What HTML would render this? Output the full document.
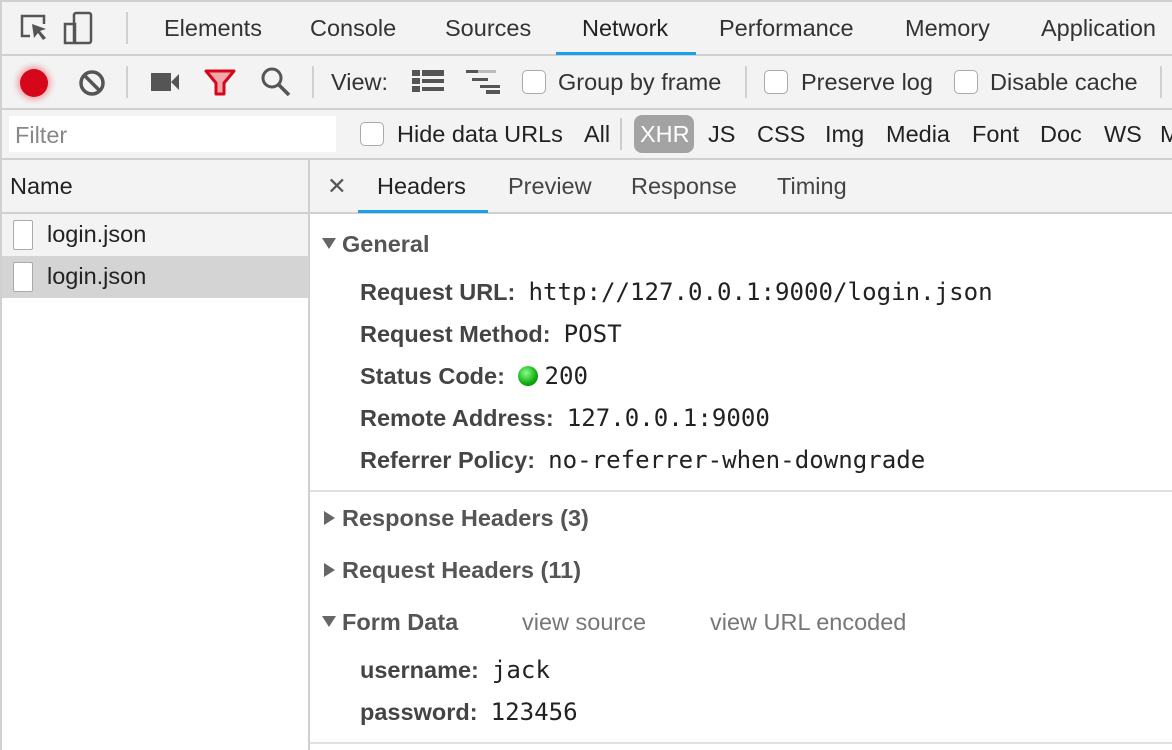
<!DOCTYPE html>
<html><head><meta charset="utf-8"><style>
*{margin:0;padding:0;box-sizing:border-box}
body{width:1172px;height:750px;overflow:hidden;background:#fff;font-family:"Liberation Sans",sans-serif;font-size:23.5px;color:#303942;position:relative}
.a{position:absolute;white-space:nowrap;line-height:30px}
.bar{position:absolute;left:0;width:1172px;background:#f3f3f3;border-bottom:2px solid #d0d0d0}
.sep{position:absolute;width:2px;background:#d0d0d0}
.cb{position:absolute;width:24px;height:24px;border:1.5px solid #aaa;border-radius:5px;background:#fff}
.b{font-weight:bold;color:#555}
.lab{font-weight:bold;color:#444}
.mono{font-family:"DejaVu Sans Mono",monospace;font-size:24.1px;color:#222}
.tri{display:inline-block;width:0;height:0}
.dn{border-left:7px solid transparent;border-right:7px solid transparent;border-top:11px solid #666;margin-right:6px;vertical-align:3px}
.rt{border-top:7px solid transparent;border-bottom:7px solid transparent;border-left:11px solid #666;margin-right:7px;margin-left:2px;vertical-align:1px}
</style></head><body>
<div style="position:absolute;left:0;top:0;width:1172px;height:2px;background:#d0d0d0"></div>
<div class="bar" style="top:2px;height:54px"></div>
<div class="bar" style="top:56px;height:54px"></div>
<div class="bar" style="top:110px;height:50px"></div>
<div class="bar" style="top:160px;height:54px"></div>
<div style="position:absolute;left:0;top:0;width:2px;height:750px;background:#d0d0d0"></div>

<svg class="a" style="left:18px;top:12px" width="36" height="34" viewBox="0 0 36 34"><path d="M12 24H4V4h22v8" fill="none" stroke="#555" stroke-width="2.5"/><path d="M14 12l14 5-6 2 6 7-3 2-5-7-4 5z" fill="#555"/></svg>
<svg class="a" style="left:62px;top:10px" width="32" height="36" viewBox="0 0 32 36"><rect x="12" y="3" width="17" height="30" rx="2" fill="none" stroke="#555" stroke-width="2.5"/><rect x="3" y="14" width="10" height="19" fill="none" stroke="#555" stroke-width="2.5"/></svg>
<div class="sep" style="left:126px;top:12px;height:32px"></div>
<div class="a" style="left:164px;top:13px;color:#333">Elements</div>
<div class="a" style="left:310px;top:13px;color:#333">Console</div>
<div class="a" style="left:445px;top:13px;color:#333">Sources</div>
<div class="a" style="left:582px;top:13px;color:#222">Network</div>
<div style="position:absolute;left:556px;top:52px;width:140px;height:3px;background:#1a9fe8"></div>
<div class="a" style="left:719px;top:13px;color:#333">Performance</div>
<div class="a" style="left:905px;top:13px;color:#333">Memory</div>
<div class="a" style="left:1041px;top:13px;color:#333">Application</div>

<div style="position:absolute;left:20px;top:69px;width:28px;height:28px;border-radius:50%;background:#d6071a;box-shadow:0 0 6px 3px rgba(230,80,90,.45)"></div>
<svg class="a" style="left:77px;top:68px" width="30" height="30" viewBox="0 0 30 30"><circle cx="15" cy="15" r="11" fill="none" stroke="#555" stroke-width="3.5"/><path d="M7 7l16 16" stroke="#555" stroke-width="3.5"/></svg>
<div class="sep" style="left:126px;top:66px;height:32px"></div>
<svg class="a" style="left:150px;top:72px" width="30" height="20" viewBox="0 0 30 20"><rect x="1" y="1" width="20" height="18" fill="#555"/><path d="M21 10l8-8v16z" fill="#555"/></svg>
<svg class="a" style="left:204px;top:69px" width="32" height="28" viewBox="0 0 32 28"><path d="M2 2h28L20 14v11h-8V14z" fill="#f1a6ab" stroke="#d6071a" stroke-width="3" stroke-linejoin="round"/></svg>
<svg class="a" style="left:260px;top:66px" width="32" height="32" viewBox="0 0 32 32"><circle cx="12" cy="12" r="9" fill="none" stroke="#555" stroke-width="3"/><path d="M18 18l11 11" stroke="#555" stroke-width="3.5"/></svg>
<div class="sep" style="left:312px;top:66px;height:32px"></div>
<div class="a" style="left:331px;top:67px;color:#333">View:</div>
<svg class="a" style="left:412px;top:70px" width="32" height="24" viewBox="0 0 32 24"><g fill="#555"><rect x="0" y="0" width="8" height="6"/><rect x="10" y="0" width="22" height="6"/><rect x="0" y="8" width="8" height="6"/><rect x="10" y="9" width="22" height="4"/><rect x="0" y="16" width="8" height="6"/><rect x="10" y="17" width="22" height="4"/></g></svg>
<svg class="a" style="left:466px;top:70px" width="34" height="24" viewBox="0 0 34 24"><rect x="0" y="0" width="30" height="3" fill="#bbb"/><rect x="0" y="0" width="12" height="3" fill="#555"/><rect x="6" y="8" width="16" height="3" fill="#555"/><rect x="14" y="15" width="20" height="3" fill="#555"/><rect x="20" y="20" width="14" height="4" fill="#555"/></svg>
<div class="cb" style="left:522px;top:70px"></div>
<div class="a" style="left:558px;top:67px;color:#333">Group by frame</div>
<div class="sep" style="left:745px;top:66px;height:32px"></div>
<div class="cb" style="left:764px;top:70px"></div>
<div class="a" style="left:801px;top:67px;color:#333">Preserve log</div>
<div class="cb" style="left:954px;top:70px"></div>
<div class="a" style="left:990px;top:67px;color:#333">Disable cache</div>
<div class="sep" style="left:1160px;top:66px;height:32px"></div>

<div style="position:absolute;left:9px;top:116px;width:327px;height:36px;background:#fff"></div>
<div class="a" style="left:15px;top:120px;color:#888">Filter</div>
<div class="cb" style="left:360px;top:122px"></div>
<div class="a" style="left:397px;top:119px;color:#222">Hide data URLs</div>
<div class="a" style="left:584px;top:119px;color:#222">All</div>
<div class="sep" style="left:620px;top:118px;height:32px;background:#ccc"></div>
<div style="position:absolute;left:634px;top:115px;width:60px;height:38px;border-radius:8px;background:#a3a3a3"></div>
<div class="a" style="left:640px;top:119px;color:#fff">XHR</div>
<div class="a" style="left:708px;top:119px;color:#222">JS</div>
<div class="a" style="left:757px;top:119px;color:#222">CSS</div>
<div class="a" style="left:825px;top:119px;color:#222">Img</div>
<div class="a" style="left:886px;top:119px;color:#222">Media</div>
<div class="a" style="left:972px;top:119px;color:#222">Font</div>
<div class="a" style="left:1040px;top:119px;color:#222">Doc</div>
<div class="a" style="left:1104px;top:119px;color:#222">WS</div>
<div class="a" style="left:1160px;top:119px;color:#222">M</div>

<div class="sep" style="left:308px;top:160px;height:590px"></div>
<div class="a" style="left:10px;top:171px;color:#222">Name</div>
<div class="a" style="left:327px;top:171px;color:#555">✕</div>
<div class="a" style="left:377px;top:171px;color:#222">Headers</div>
<div style="position:absolute;left:358px;top:210px;width:130px;height:3px;background:#1a9fe8"></div>
<div class="a" style="left:508px;top:171px;color:#444">Preview</div>
<div class="a" style="left:631px;top:171px;color:#444">Response</div>
<div class="a" style="left:777px;top:171px;color:#444">Timing</div>

<div style="position:absolute;left:2px;top:214px;width:306px;height:42px;background:#f3f3f3"></div>
<div style="position:absolute;left:2px;top:256px;width:306px;height:42px;background:#d4d4d4"></div>
<div style="position:absolute;left:13px;top:220px;width:20px;height:30px;background:#fff;border:1.5px solid #aaa;border-radius:2px"></div>
<div style="position:absolute;left:13px;top:262px;width:20px;height:30px;background:#fff;border:1.5px solid #aaa;border-radius:2px"></div>
<div class="a" style="left:47px;top:219px;color:#222">login.json</div>
<div class="a" style="left:47px;top:261px;color:#222">login.json</div>

<div class="a b" style="left:322px;top:229px"><span class="tri dn"></span>General</div>
<div class="a" style="left:360px;top:277px"><span class="lab">Request URL:</span>&nbsp; <span class="mono">http://127.0.0.1:9000/login.json</span></div>
<div class="a" style="left:360px;top:319px"><span class="lab">Request Method:</span>&nbsp; <span class="mono">POST</span></div>
<div class="a" style="left:360px;top:361px"><span class="lab">Status Code:</span>&nbsp; <span style="display:inline-block;width:20px;height:20px;border-radius:50%;background:radial-gradient(circle at 40% 35%,#8f8,#1a1 60%,#070);vertical-align:-2px"></span>&nbsp;<span class="mono">200</span></div>
<div class="a" style="left:360px;top:403px"><span class="lab">Remote Address:</span>&nbsp; <span class="mono">127.0.0.1:9000</span></div>
<div class="a" style="left:360px;top:445px"><span class="lab">Referrer Policy:</span>&nbsp; <span class="mono">no-referrer-when-downgrade</span></div>
<div style="position:absolute;left:310px;top:490px;width:862px;height:2px;background:#e0e0e0"></div>
<div class="a b" style="left:322px;top:503px"><span class="tri rt"></span>Response Headers (3)</div>
<div class="a b" style="left:322px;top:555px"><span class="tri rt"></span>Request Headers (11)</div>
<div class="a b" style="left:322px;top:607px"><span class="tri dn"></span>Form Data</div>
<div class="a" style="left:522px;top:607px;color:#777">view source</div>
<div class="a" style="left:710px;top:607px;color:#777">view URL encoded</div>
<div class="a" style="left:360px;top:655px"><span class="lab">username:</span>&nbsp; <span class="mono">jack</span></div>
<div class="a" style="left:360px;top:697px"><span class="lab">password:</span>&nbsp; <span class="mono">123456</span></div>
<div style="position:absolute;left:310px;top:742px;width:862px;height:2px;background:#e0e0e0"></div>
</body></html>
